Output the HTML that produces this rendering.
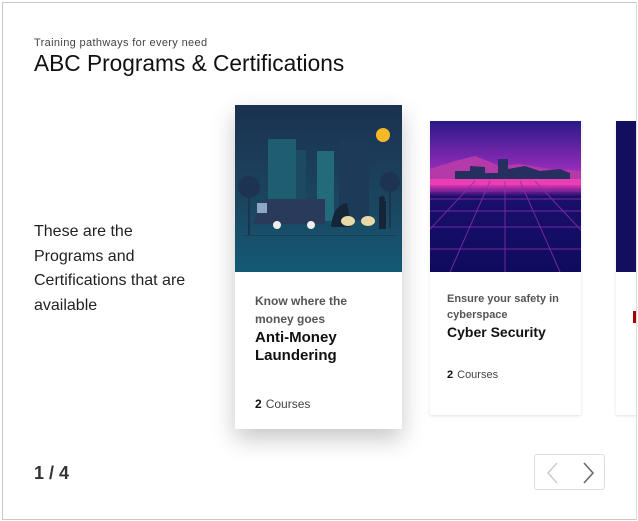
<!DOCTYPE html>
<html><head><meta charset="utf-8"><style>
*{margin:0;padding:0;box-sizing:border-box}
body{width:638px;height:521px;background:#fff;font-family:"Liberation Sans",sans-serif;position:relative;overflow:hidden;color:#111}
.frame{position:absolute;left:2px;top:2px;width:635px;height:518px;border:1px solid #c8c8c8;border-right:1px solid #ddd;overflow:hidden}
.sub{position:absolute;font-size:11px;letter-spacing:.35px;color:#444}
.h{position:absolute;font-size:22.7px;color:#111}
.intro{position:absolute;font-size:16px;line-height:24.5px;color:#222;width:170px}
.card{position:absolute;background:#fff;box-shadow:0 1px 3px rgba(0,0,0,.12)}
.c1{width:167px;height:324px;box-shadow:0 10px 22px rgba(0,0,0,.22)}
.c2{width:151px;height:294px}
.c3{width:40px;height:294px}
.t1{font-size:12px;color:#555;font-weight:bold;line-height:18px}
.t2{font-weight:bold;color:#111}
.cnt{font-size:12px;color:#444}
.cnt b{color:#111;margin-right:4px}
.pg{position:absolute;font-size:18px;font-weight:bold;color:#333}
.nav{position:absolute;width:71px;height:36px;border:1px solid #ddd;border-radius:3px}
</style></head><body><div class="frame">
<div class="sub" style="left:31px;top:34px">Training pathways for every need</div>
<div class="h" style="left:31px;top:47px">ABC Programs &amp; Certifications</div>
<div class="intro" style="left:31px;top:217px">These are the Programs and Certifications that are available</div>

<div class="card c1" style="left:232px;top:102px">
<svg width="167" height="167" viewBox="0 0 167 167">
<defs><linearGradient id="g1" x1="0" y1="0" x2="0" y2="1"><stop offset="0" stop-color="#1b3150"/><stop offset=".6" stop-color="#1b4660"/><stop offset="1" stop-color="#135a75"/></linearGradient></defs>
<rect width="167" height="167" fill="url(#g1)"/>
<circle cx="148" cy="30" r="7" fill="#f6b926"/>
<rect x="33" y="34" width="28" height="82" fill="#1f5d73"/>
<rect x="61" y="45" width="10" height="70" fill="#1d4a63"/>
<rect x="82" y="46" width="17" height="70" fill="#236a7c"/>
<rect x="104" y="35" width="30" height="80" fill="#1d3a58"/>
<circle cx="14" cy="82" r="11" fill="#1c3452"/><rect x="13" y="90" width="2" height="40" fill="#1c3452"/>
<circle cx="155" cy="77" r="10" fill="#1c3452"/><rect x="154" y="85" width="2" height="38" fill="#1c3452"/>
<path d="M18 119 L28 94 L90 94 L90 119 Z" fill="#2a3a5a"/>
<rect x="22" y="98" width="10" height="10" fill="#8fa7c8"/>
<circle cx="42" cy="120" r="4" fill="#eee"/><circle cx="76" cy="120" r="4" fill="#eee"/>
<path d="M96 122 Q98 100 112 98 L116 122 Z" fill="#142538"/>
<ellipse cx="113" cy="116" rx="7" ry="5" fill="#e9d9a6"/><ellipse cx="133" cy="116" rx="7" ry="5" fill="#e9d9a6"/>
<rect x="144" y="96" width="7" height="28" fill="#142538"/><circle cx="147" cy="94" r="3" fill="#142538"/>
<rect x="10" y="130" width="150" height="1" fill="#1a3d55"/>
</svg>
<div style="padding:15px 20px 0 20px">
<div class="t1">Know where the money goes</div>
<div class="t2" style="font-size:15px;line-height:18px;margin-top:1px">Anti-Money Laundering</div>
<div class="cnt" style="margin-top:32px"><b>2</b>Courses</div>
</div></div>

<div class="card c2" style="left:427px;top:118px">
<svg width="151" height="151" viewBox="0 0 151 151">
<defs><linearGradient id="g2" x1="0" y1="0" x2="0" y2="1"><stop offset="0" stop-color="#2a1a8a"/><stop offset=".3" stop-color="#8d2ab5"/><stop offset=".42" stop-color="#e536b9"/><stop offset=".5" stop-color="#1a0f6b"/><stop offset="1" stop-color="#0e0b5e"/></linearGradient></defs>
<rect width="151" height="151" fill="url(#g2)"/>
<path d="M0 48 L25 40 L45 35 L70 45 L90 43 L120 48 L151 50 L151 58 L0 58Z" fill="#b43aa9"/>
<path d="M25 58 L25 50 L40 50 L40 45 L55 46 L55 52 L68 52 L68 38 L78 38 L78 48 L95 45 L110 50 L130 48 L140 52 L140 58Z" fill="#253060"/>
<rect x="0" y="58" width="151" height="6" fill="#ea3fb2"/>
<g stroke="#8a2fb0" stroke-width="1" opacity=".8">
<line x1="0" y1="70" x2="151" y2="70"/><line x1="0" y1="78" x2="151" y2="78"/><line x1="0" y1="90" x2="151" y2="90"/><line x1="0" y1="106" x2="151" y2="106"/><line x1="0" y1="128" x2="151" y2="128"/>
<line x1="75" y1="60" x2="75" y2="151"/><line x1="60" y1="60" x2="20" y2="151"/><line x1="90" y1="60" x2="130" y2="151"/><line x1="45" y1="60" x2="-40" y2="151"/><line x1="105" y1="60" x2="190" y2="151"/>
</g></svg>
<div style="padding:14px 17px 0 17px">
<div class="t1" style="font-size:11px;line-height:16px">Ensure your safety in cyberspace</div>
<div class="t2" style="font-size:14px;line-height:18px;margin-top:0">Cyber Security</div>
<div class="cnt" style="margin-top:28px;font-size:11px"><b>2</b>Courses</div>
</div></div>

<div class="card c3" style="left:613px;top:118px"><div style="width:40px;height:151px;background:#12105e"></div>
<div style="width:3px;height:12px;background:#a00;position:absolute;left:17px;top:190px"></div></div>

<div class="pg" style="left:31px;top:460px">1 / 4</div>
<div class="nav" style="left:531px;top:451px"><svg width="71" height="36"><path d="M22 8 L13 18 L22 28" fill="none" stroke="#ccc" stroke-width="1.5"/><path d="M49 8 L58 18 L49 28" fill="none" stroke="#666" stroke-width="1.5"/></svg></div>
</div></body></html>
